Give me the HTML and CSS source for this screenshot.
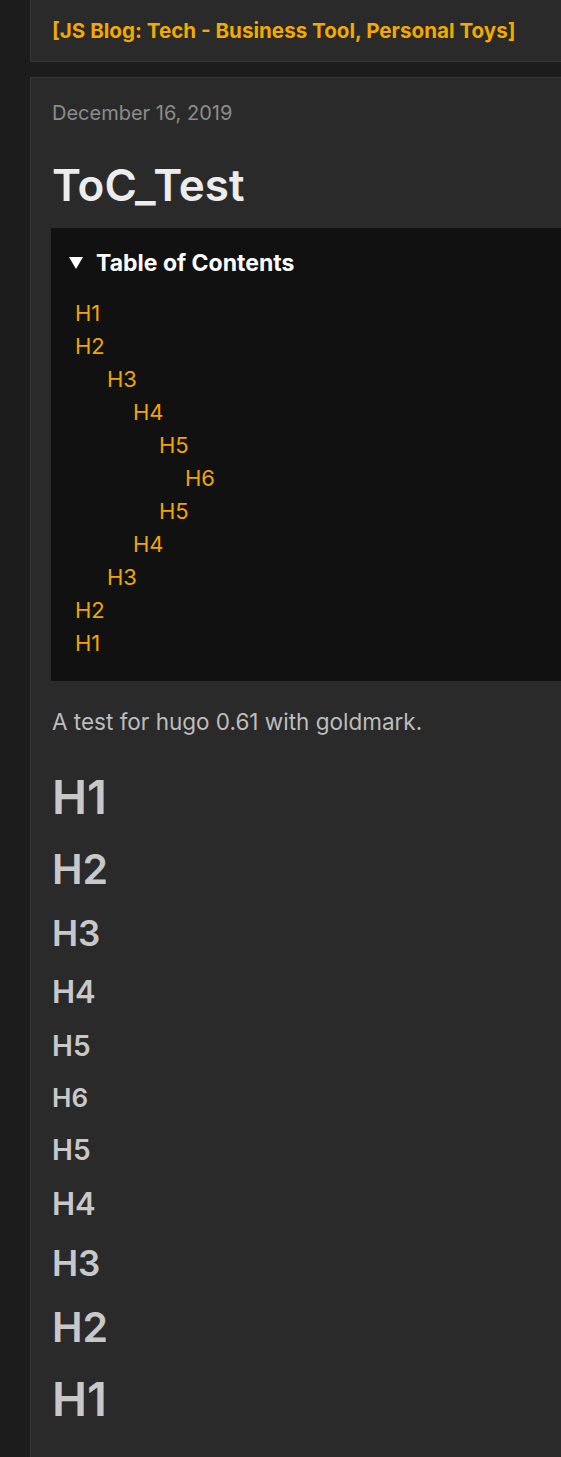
FILE: index.html
```html
<!DOCTYPE html>
<html lang="en">
<head>
<meta charset="utf-8">
<title>ToC_Test</title>
<link rel="stylesheet" href="styles.css">
</head>
<body>
<header class="site-header">
  <a class="site-title" href="#">[JS Blog: Tech - Business Tool, Personal Toys]</a>
</header>
<main class="post">
  <div class="post-date">December 16, 2019</div>
  <h1 class="post-title">ToC_Test</h1>
  <section class="toc">
    <div class="toc-summary">
      <svg class="toc-arrow" width="14" height="12" viewBox="0 0 14 12"><path d="M0 0 H14 L7 12 Z" fill="#ffffff"/></svg>
      <span>Table of Contents</span>
    </div>
    <ul class="toc-list">
      <li class="lv1"><a href="#">H1</a></li>
      <li class="lv1"><a href="#">H2</a></li>
      <li class="lv3"><a href="#">H3</a></li>
      <li class="lv4"><a href="#">H4</a></li>
      <li class="lv5"><a href="#">H5</a></li>
      <li class="lv6"><a href="#">H6</a></li>
      <li class="lv5"><a href="#">H5</a></li>
      <li class="lv4"><a href="#">H4</a></li>
      <li class="lv3"><a href="#">H3</a></li>
      <li class="lv1"><a href="#">H2</a></li>
      <li class="lv1"><a href="#">H1</a></li>
    </ul>
  </section>
  <p class="intro">A test for hugo 0.61 with goldmark.</p>
  <div class="content">
    <h1 class="h1">H1</h1>
    <h2 class="h2">H2</h2>
    <h3 class="h3">H3</h3>
    <h4 class="h4">H4</h4>
    <h5 class="h5">H5</h5>
    <h6 class="h6">H6</h6>
    <h5 class="h5">H5</h5>
    <h4 class="h4">H4</h4>
    <h3 class="h3">H3</h3>
    <h2 class="h2">H2</h2>
    <h1 class="h1">H1</h1>
  </div>
</main>
</body>
</html>
```

FILE: styles.css
```css
html, body {
  margin: 0;
  padding: 0;
}
body {
  background: #1c1c1c;
  font-family: Inter, "Noto Sans", sans-serif;
  overflow: hidden;
  height: 1457px;
}
a {
  text-decoration: none;
}
.site-header {
  margin-left: 30px;
  margin-right: -20px;
  height: 61px;
  background: #2a2a2a;
  border: 1px solid #383838;
  border-top: none;
  padding-left: 21px;
  display: flex;
  align-items: center;
}
.site-title {
  color: #f2a900;
  font-weight: 700;
  font-size: 20.6px;
  line-height: 26px;
}
.post {
  margin: 15px -20px 0 30px;
  background: #2a2a2a;
  border: 1px solid #383838;
  border-bottom: none;
  padding: 23px 0 30px 20px;
}
.post-date {
  color: #8c8c8c;
  font-size: 20px;
  line-height: 24px;
  padding-left: 1px;
}
.post-title {
  margin: 32px 0 15px;
  color: #ececec;
  font-size: 44px;
  line-height: 56px;
  font-weight: 600;
  padding-left: 1px;
}
.toc {
  background: #111111;
  padding: 21px 0 21px 0;
}
.toc-summary {
  display: flex;
  align-items: center;
  padding-left: 18px;
  gap: 13px;
  color: #ffffff;
  font-weight: 700;
  font-size: 23px;
  line-height: 28px;
}
.toc-arrow {
  flex: none;
}
.toc-list {
  list-style: none;
  margin: 20px 0 0;
  padding: 0;
}
.toc-list li {
  font-size: 22px;
  line-height: 33px;
}
.toc-list a {
  color: #f0a500;
}
.lv1 { padding-left: 24px; }
.lv3 { padding-left: 56px; }
.lv4 { padding-left: 82px; }
.lv5 { padding-left: 108px; }
.lv6 { padding-left: 134px; }
.intro {
  margin: 26px 0 32px;
  color: #bdbdbd;
  font-size: 22.5px;
  line-height: 30px;
  padding-left: 1px;
}
.content h1, .content h2, .content h3, .content h4, .content h5, .content h6 {
  margin: 0 0 18.6px;
  color: #c8c8c8;
  font-weight: 600;
  padding-left: 1px;
}
.content .h1:last-child {
  margin-bottom: 0;
}
.h1 { font-size: 47px; line-height: 56px; }
.h2 { font-size: 41px; line-height: 50px; }
.h3 { font-size: 35px; line-height: 42px; }
.h4 { font-size: 31px; line-height: 38px; }
.h5 { font-size: 28px; line-height: 34px; }
.h6 { font-size: 26px; line-height: 32px; }
```
